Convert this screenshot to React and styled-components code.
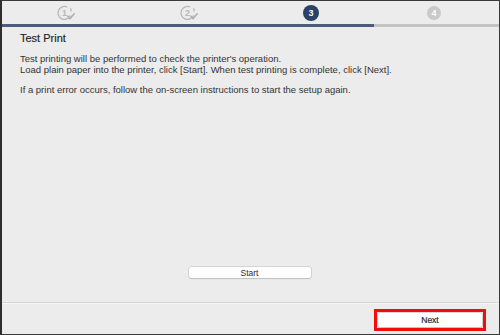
import React from "react";
import styled, { createGlobalStyle } from "styled-components";

const Global = createGlobalStyle`
  html, body { margin: 0; padding: 0; background: #ececec; }
  body { font-family: "Liberation Sans", Arial, sans-serif; }
`;

const Frame = styled.div`
  width: 500px;
  height: 335px;
  box-sizing: border-box;
  border: 1px solid #3a3a3a;
  border-left: 2px solid #2e2e2e;
  background: #ececec;
  display: flex;
  flex-direction: column;
`;

const StepBar = styled.div`
  height: 23px;
  display: grid;
  grid-template-columns: repeat(4, 122.5px);
  padding-left: 3px;
  align-items: center;
`;

const StepCell = styled.div`
  display: flex;
  justify-content: center;
  align-items: center;
  height: 100%;
  padding-top: 1px;
`;

const Progress = styled.div`
  display: flex;
  height: 3px;
`;

const ProgressPart = styled.div`
  height: 3px;
  background: ${(p) => (p.$done ? "#4d5c7c" : "#c3c3c3")};
  flex: ${(p) => (p.$done ? "0 0 372px" : "1 1 auto")};
`;

const Content = styled.div`
  flex: 1;
  padding: 4px 18px 0;
  display: flex;
  flex-direction: column;
  color: #2a2a2a;
`;

const Title = styled.div`
  font-size: 11px;
  line-height: 14px;
  color: #222;
  font-weight: 500;
  -webkit-text-stroke: 0.15px #222;
  margin-bottom: 8px;
`;

const Para = styled.p`
  margin: 0 0 9px;
  font-size: 9.5px;
  line-height: 11px;
  color: #333;
`;

const StartRow = styled.div`
  margin-top: auto;
  display: flex;
  justify-content: center;
  padding-bottom: 24px;
  padding-right: 2px;
`;

const Button = styled.div`
  box-sizing: border-box;
  width: ${(p) => p.$w}px;
  height: ${(p) => p.$h}px;
  background: #fff;
  border-radius: 2px;
  box-shadow: 0 0 0 0.5px #bdbdbd, 0 1px 1px rgba(0, 0, 0, 0.18);
  display: flex;
  align-items: center;
  justify-content: center;
  font-size: 8.5px;
  color: #2a2a2a;
  font-weight: ${(p) => (p.$bold ? 500 : 400)};
  -webkit-text-stroke: ${(p) => (p.$bold ? "0.2px #2a2a2a" : "0")};
`;

const Footer = styled.div`
  box-sizing: border-box;
  height: 32px;
  border-top: 1px solid #d6d6d6;
  box-shadow: inset 0 1px 0 #f6f6f6;
  display: flex;
  justify-content: flex-end;
  align-items: flex-start;
  padding: 6px 13px 0 0;
`;

const Highlight = styled.div`
  border: 3px solid #f20d0d;
  padding: 1px;
  display: flex;
`;

function DoneStep({ n }) {
  return (
    <svg width="20" height="18" viewBox="0 0 20 18">
      <path
        d="M14.5 11.5 A6.5 6.5 0 1 1 11.2 3.0"
        fill="none"
        stroke="#b8b8b8"
        strokeWidth="1.3"
      />
      <path
        d="M14.6 4.2 A6.5 6.5 0 0 1 15 7.5"
        fill="none"
        stroke="#b8b8b8"
        strokeWidth="1.3"
      />
      <text
        x="8.6"
        y="12.4"
        textAnchor="middle"
        fontSize="9"
        fontFamily="Liberation Sans, Arial, sans-serif"
        fontWeight="bold"
        fill="#b8b8b8"
      >
        {n}
      </text>
      <path
        d="M11.8 12.2 L14 14.6 L18.2 9.8"
        fill="none"
        stroke="#b0b0b0"
        strokeWidth="1.6"
        strokeLinecap="round"
        strokeLinejoin="round"
      />
    </svg>
  );
}

function FilledStep({ n, color, size }) {
  const r = size / 2;
  return (
    <svg width={size} height={size} viewBox={`0 0 ${size} ${size}`}>
      <circle cx={r} cy={r} r={r} fill={color} />
      <text
        x={r}
        y={r + 3.3}
        textAnchor="middle"
        fontSize="9"
        fontWeight="bold"
        fontFamily="Liberation Sans, Arial, sans-serif"
        fill="#fff"
      >
        {n}
      </text>
    </svg>
  );
}

export default function App() {
  return (
    <>
      <Global />
      <Frame>
        <StepBar>
          <StepCell>
            <DoneStep n="1" />
          </StepCell>
          <StepCell>
            <DoneStep n="2" />
          </StepCell>
          <StepCell>
            <FilledStep n="3" color="#2b4266" size={16} />
          </StepCell>
          <StepCell>
            <FilledStep n="4" color="#c9c9c9" size={14} />
          </StepCell>
        </StepBar>
        <Progress>
          <ProgressPart $done />
          <ProgressPart />
        </Progress>
        <Content>
          <Title>Test Print</Title>
          <Para>
            Test printing will be performed to check the printer's operation.
            <br />
            Load plain paper into the printer, click [Start]. When test printing
            is complete, click [Next].
          </Para>
          <Para>
            If a print error occurs, follow the on-screen instructions to start
            the setup again.
          </Para>
          <StartRow>
            <Button $w={122} $h={11}>
              Start
            </Button>
          </StartRow>
        </Content>
        <Footer>
          <Highlight>
            <Button $w={104} $h={14} $bold>
              Next
            </Button>
          </Highlight>
        </Footer>
      </Frame>
    </>
  );
}
